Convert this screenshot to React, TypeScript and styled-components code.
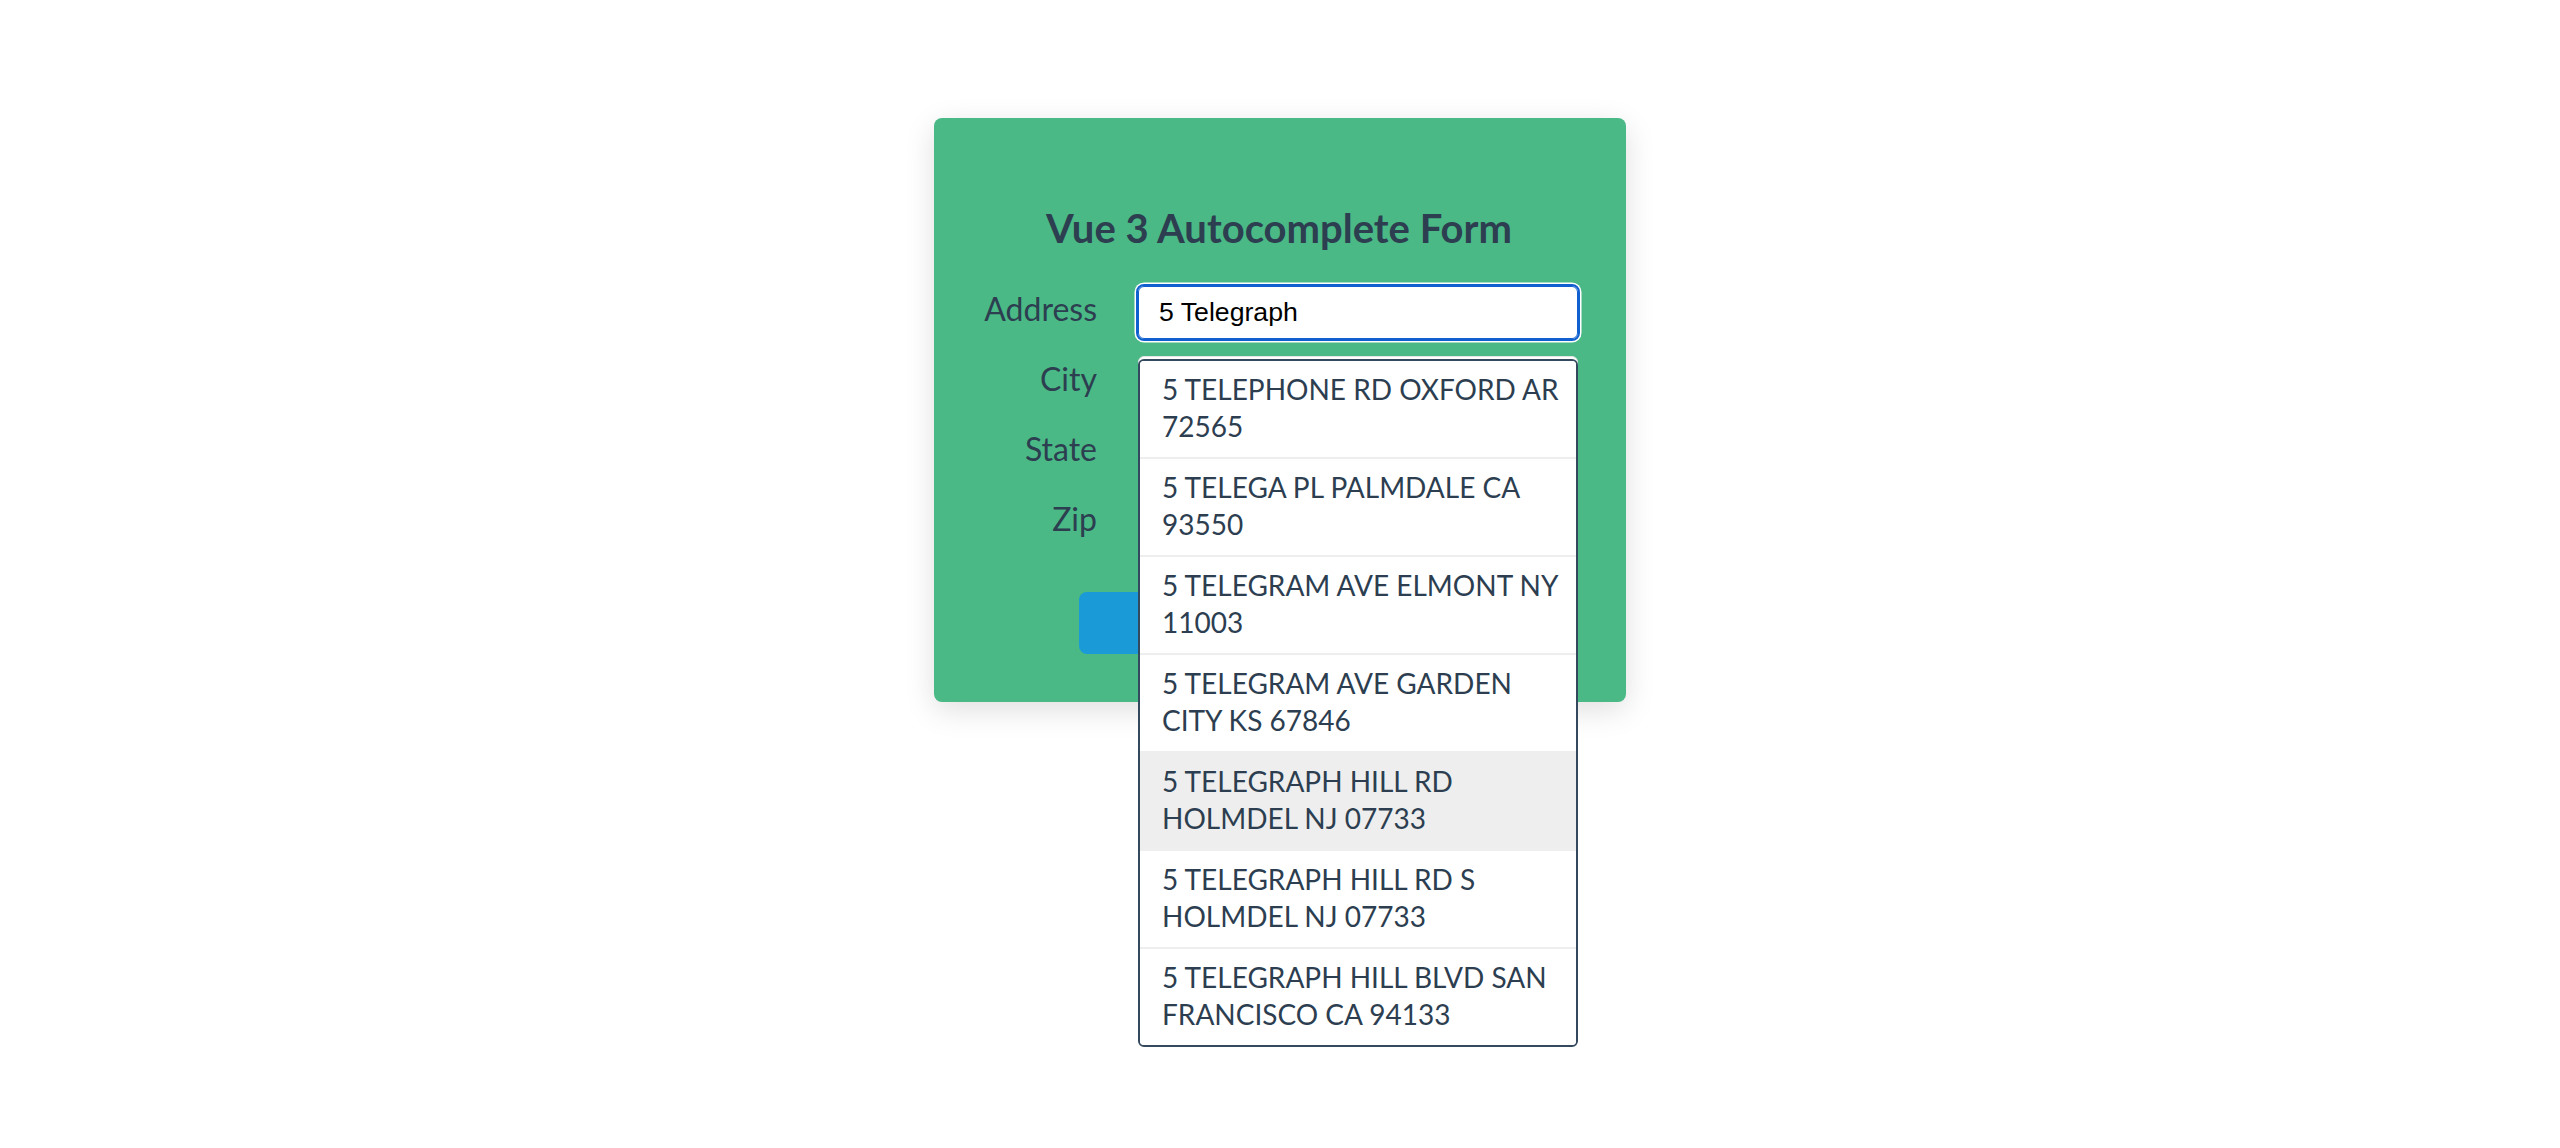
import React from 'react'
import styled, { createGlobalStyle } from 'styled-components'

const GlobalStyle = createGlobalStyle`
  html, body {
    margin: 0;
    padding: 0;
    background: #ffffff;
    font-family: Lato, 'Noto Sans', 'DejaVu Sans', sans-serif;
    color: #2c3e50;
    -webkit-font-smoothing: antialiased;
  }
  * { box-sizing: border-box; }
`

const Page = styled.div`
  display: flex;
  justify-content: center;
  align-items: flex-start;
  padding-top: 118px;
  min-height: 1148px;
`

const Card = styled.div`
  width: 692px;
  padding: 86px 48px 48px 46px;
  background: #4ab985;
  border-radius: 8px;
  box-shadow: 0 8px 30px rgba(0, 0, 0, 0.13);
`

const Title = styled.h2`
  margin: 0 0 34px;
  font-size: 40px;
  font-weight: 700;
  line-height: 1.2;
  text-align: center;
  color: #2c3e50;
`

const Form = styled.form`
  display: grid;
  grid-template-columns: 117px 440px;
  column-gap: 41px;
  row-gap: 17px;
  align-items: center;
`

const Label = styled.label`
  text-align: right;
  font-size: 32px;
  line-height: 1.2;
  color: #2c3e50;
  padding-bottom: 6px;
  white-space: nowrap;
`

const Field = styled.div<{ $top?: boolean }>`
  position: relative;
  height: 53px;
  z-index: ${p => (p.$top ? 5 : 1)};
`

const Input = styled.input<{ $focused?: boolean }>`
  display: block;
  width: 100%;
  height: 53px;
  padding: 0 20px;
  border-radius: 6px;
  background: #ffffff;
  font-family: 'Liberation Sans', Arial, sans-serif;
  font-size: 26.67px;
  color: #000000;
  border: 1px solid ${p => (p.$focused ? '#1160d0' : '#e4e4e4')};
  outline: ${p => (p.$focused ? '2px solid #1160d0' : 'none')};
  outline-offset: 0;
  box-shadow: ${p => (p.$focused ? '0 0 0 3.5px #ffffff' : 'none')};
`

const Dropdown = styled.ul`
  position: absolute;
  top: 73px;
  left: 0;
  width: 440px;
  margin: 0;
  padding: 0;
  list-style: none;
  background: #ffffff;
  border: 2px solid #34495e;
  border-radius: 6px;
  overflow: hidden;
`

const Option = styled.li<{ $active?: boolean }>`
  padding: 10px 8px 12px 22px;
  font-size: 28px;
  line-height: 37px;
  color: #2c3e50;
  background: ${p => (p.$active ? '#eeeeee' : '#ffffff')};
  border-bottom: 2px solid #eeeeee;
  cursor: pointer;

  &:last-child {
    border-bottom: none;
  }
`

const ButtonRow = styled.div`
  grid-column: 1 / -1;
  display: flex;
  justify-content: center;
  margin-top: 26px;
`

const SubmitButton = styled.button`
  width: 400px;
  height: 62px;
  border: none;
  border-radius: 8px;
  background: #1a9ad6;
  color: #ffffff;
  font-family: Lato, sans-serif;
  font-size: 30px;
  cursor: pointer;
`

const SUGGESTIONS = [
  '5 TELEPHONE RD OXFORD AR 72565',
  '5 TELEGA PL PALMDALE CA 93550',
  '5 TELEGRAM AVE ELMONT NY 11003',
  '5 TELEGRAM AVE GARDEN CITY KS 67846',
  '5 TELEGRAPH HILL RD HOLMDEL NJ 07733',
  '5 TELEGRAPH HILL RD S HOLMDEL NJ 07733',
  '5 TELEGRAPH HILL BLVD SAN FRANCISCO CA 94133',
]

const OTHER_FIELDS = ['City', 'State', 'Zip']

export default function App() {
  const [address, setAddress] = React.useState('5 Telegraph')
  const [active, setActive] = React.useState(4)

  return (
    <Page>
      <GlobalStyle />
      <Card>
        <Title>Vue 3 Autocomplete Form</Title>
        <Form onSubmit={e => e.preventDefault()}>
          <Label>Address</Label>
          <Field $top>
            <Input $focused value={address} onChange={e => setAddress(e.target.value)} />
            <Dropdown>
              {SUGGESTIONS.map((s, i) => (
                <Option key={s} $active={i === active} onMouseEnter={() => setActive(i)}>
                  {s}
                </Option>
              ))}
            </Dropdown>
          </Field>
          {OTHER_FIELDS.map(f => (
            <React.Fragment key={f}>
              <Label>{f}</Label>
              <Field>
                <Input />
              </Field>
            </React.Fragment>
          ))}
          <ButtonRow>
            <SubmitButton type="submit">Submit</SubmitButton>
          </ButtonRow>
        </Form>
      </Card>
    </Page>
  )
}
